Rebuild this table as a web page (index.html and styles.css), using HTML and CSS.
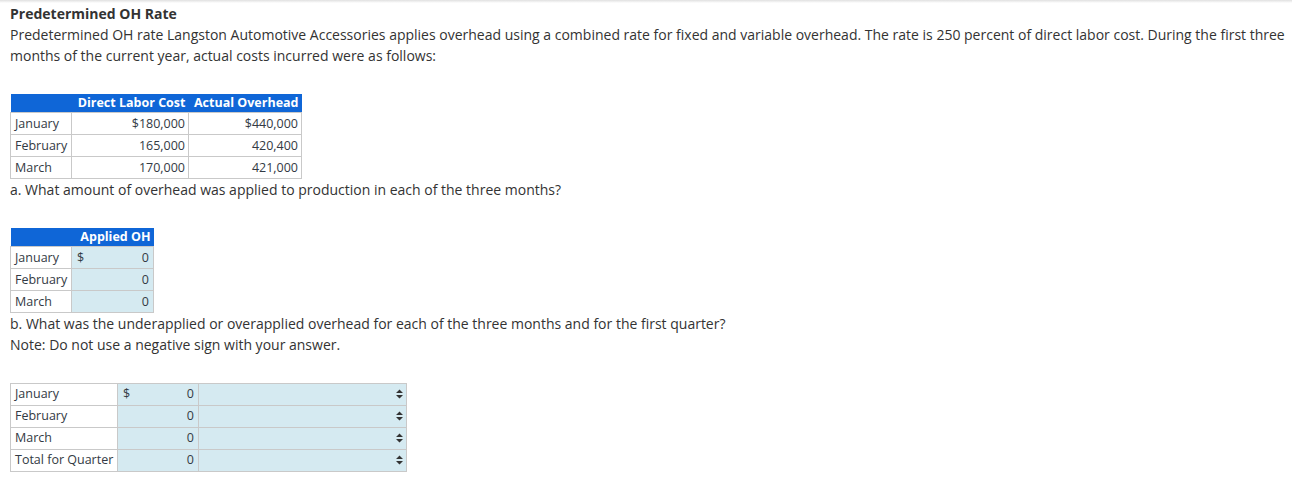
FILE: index.html
```html
<!DOCTYPE html>
<html>
<head>
<meta charset="utf-8">
<link rel="stylesheet" href="styles.css">
</head>
<body>
<div class="topshade"></div>
<main class="content">
  <h1 class="title">Predetermined OH Rate</h1>
  <p class="text">Predetermined OH rate Langston Automotive Accessories applies overhead using a combined rate for fixed and variable overhead. The rate is 250 percent of direct labor cost. During the first three months of the current year, actual costs incurred were as follows:</p>

  <table class="grid t1">
    <colgroup><col class="c1"><col class="c2"><col class="c3"></colgroup>
    <thead>
      <tr class="hrow"><th></th><th>Direct Labor Cost</th><th>Actual Overhead</th></tr>
    </thead>
    <tbody>
      <tr><td class="lbl">January</td><td class="num">$180,000</td><td class="num">$440,000</td></tr>
      <tr><td class="lbl">February</td><td class="num">165,000</td><td class="num">420,400</td></tr>
      <tr><td class="lbl">March</td><td class="num">170,000</td><td class="num">421,000</td></tr>
    </tbody>
  </table>
  <p class="text">a. What amount of overhead was applied to production in each of the three months?</p>

  <table class="grid t2">
    <colgroup><col class="c1"><col class="c2"></colgroup>
    <thead>
      <tr class="hrow"><th></th><th>Applied OH</th></tr>
    </thead>
    <tbody>
      <tr><td class="lbl">January</td><td class="inp"><div class="val"><span>$</span><span>0</span></div></td></tr>
      <tr><td class="lbl">February</td><td class="inp"><div class="val"><span></span><span>0</span></div></td></tr>
      <tr><td class="lbl">March</td><td class="inp"><div class="val"><span></span><span>0</span></div></td></tr>
    </tbody>
  </table>
  <p class="text">b. What was the underapplied or overapplied overhead for each of the three months and for the first quarter?<br>Note: Do not use a negative sign with your answer.</p>

  <table class="grid t3">
    <colgroup><col class="c1"><col class="c2"><col class="c3"></colgroup>
    <tbody>
      <tr><td class="lbl">January</td><td class="inp"><div class="val"><span>$</span><span>0</span></div></td><td class="inp sel"><svg class="spin" width="7" height="10" viewBox="0 0 7 10"><path d="M3.5 0.5 L7 4 L0 4 Z M0 6 L7 6 L3.5 9.5 Z" fill="#333"/></svg></td></tr>
      <tr><td class="lbl">February</td><td class="inp"><div class="val"><span></span><span>0</span></div></td><td class="inp sel"><svg class="spin" width="7" height="10" viewBox="0 0 7 10"><path d="M3.5 0.5 L7 4 L0 4 Z M0 6 L7 6 L3.5 9.5 Z" fill="#333"/></svg></td></tr>
      <tr><td class="lbl">March</td><td class="inp"><div class="val"><span></span><span>0</span></div></td><td class="inp sel"><svg class="spin" width="7" height="10" viewBox="0 0 7 10"><path d="M3.5 0.5 L7 4 L0 4 Z M0 6 L7 6 L3.5 9.5 Z" fill="#333"/></svg></td></tr>
      <tr><td class="lbl">Total for Quarter</td><td class="inp"><div class="val"><span></span><span>0</span></div></td><td class="inp sel"><svg class="spin" width="7" height="10" viewBox="0 0 7 10"><path d="M3.5 0.5 L7 4 L0 4 Z M0 6 L7 6 L3.5 9.5 Z" fill="#333"/></svg></td></tr>
    </tbody>
  </table>
</main>
</body>
</html>
```

FILE: styles.css
```css
html, body {
  margin: 0;
  padding: 0;
  background: #fff;
}
body {
  font-family: "Open Sans", "Liberation Sans", sans-serif;
  color: #333;
  font-size: 14px;
  line-height: 21px;
}
.topshade {
  height: 3px;
  background: linear-gradient(#e0e0e0, #fff);
}
.content {
  padding: 0 4px 0 10px;
}
.title {
  font-size: 14px;
  font-weight: 700;
  line-height: 21px;
  margin: 0;
}
.text {
  margin: 0 0 27.5px 0;
}
.grid {
  border-collapse: collapse;
  table-layout: fixed;
  font-size: 12.5px;
  line-height: 16px;
  color: #333a44;
}
.grid tr { height: 22px; }
.grid tr.hrow { height: 19px; }
.grid th {
  background: #0f66d7;
  color: #fff;
  font-weight: 700;
  text-align: right;
  padding: 1px 3px 0 3px;
  white-space: nowrap;
}
.grid td {
  border: 1px solid #c9c9c9;
  padding: 0 3px;
  white-space: nowrap;
}
.grid .lbl { text-align: left; padding-left: 4px; }
.grid .num { text-align: right; }
.grid .inp { background: #d5eaf1; }
.val {
  display: flex;
  justify-content: space-between;
  padding: 0 1px 0 2px;
}
.sel { padding-right: 13px; }
.spin { display: block; margin-left: auto; }

.t1 { width: 291px; }
.t1 .c1 { width: 61px; }
.t1 .c2 { width: 117px; }
.t1 .c3 { width: 113px; }
.t2 { width: 143px; }
.t2 .c1 { width: 61px; }
.t2 .c2 { width: 82px; }
.t3 { width: 396px; }
.t3 .c1 { width: 107px; }
.t3 .c2 { width: 81px; }
.t3 .c3 { width: 208px; }
```
